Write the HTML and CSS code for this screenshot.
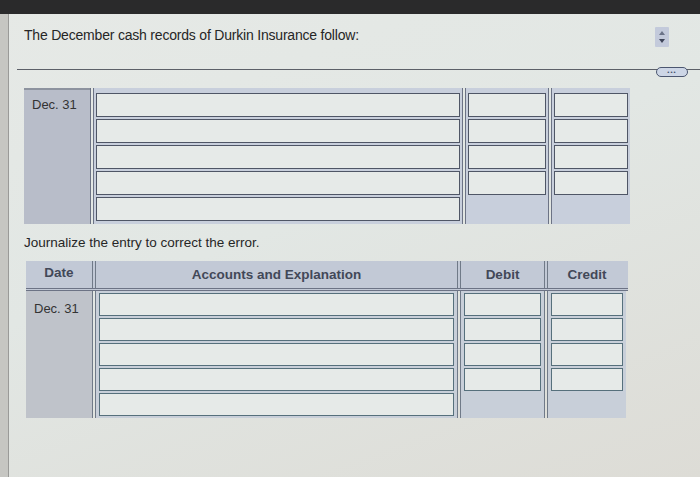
FILE: index.html
```html
<!DOCTYPE html>
<html>
<head>
<meta charset="utf-8">
<link rel="stylesheet" href="styles.css">
</head>
<body>
<div class="topbar"></div>
<div class="frame">
  <div class="edge"></div>
  <div class="content">
    <div class="titlerow">
      <div class="title">The December cash records of Durkin Insurance follow:</div>
      <div class="scroller">
        <svg width="12" height="18" viewBox="0 0 12 18"><path d="M6 3 L9 7 L3 7 Z" fill="#6b7388"/><path d="M3 11 L9 11 L6 15 Z" fill="#3d4458"/></svg>
      </div>
    </div>
    <div class="ruleRow">
      <div class="rule"></div>
      <div class="pill">&bull;&bull;&bull;</div>
    </div>

    <div class="t1">
      <div class="col date"><span class="datetxt">Dec. 31</span></div>
      <div class="sep"></div>
      <div class="col acct">
        <div class="inp"></div><div class="inp"></div><div class="inp"></div><div class="inp"></div><div class="inp"></div>
      </div>
      <div class="sep"></div>
      <div class="col num">
        <div class="inp"></div><div class="inp"></div><div class="inp"></div><div class="inp"></div>
      </div>
      <div class="sep"></div>
      <div class="col num cr">
        <div class="inp"></div><div class="inp"></div><div class="inp"></div><div class="inp"></div>
      </div>
    </div>

    <div class="prompt">Journalize the entry to correct the error.</div>

    <div class="t2">
      <div class="hdr">
        <div class="h hdate">Date</div>
        <div class="sep"></div>
        <div class="h hacct">Accounts and Explanation</div>
        <div class="sep"></div>
        <div class="h hdeb">Debit</div>
        <div class="sep"></div>
        <div class="h hcred">Credit</div>
      </div>
      <div class="body">
        <div class="col date2"><span class="datetxt">Dec. 31</span></div>
        <div class="sep"></div>
        <div class="col acct2">
          <div class="inp"></div><div class="inp"></div><div class="inp"></div><div class="inp"></div><div class="inp"></div>
        </div>
        <div class="sep"></div>
        <div class="col num2">
          <div class="inp"></div><div class="inp"></div><div class="inp"></div><div class="inp"></div>
        </div>
        <div class="sep"></div>
        <div class="col num2 cr2">
          <div class="inp"></div><div class="inp"></div><div class="inp"></div><div class="inp"></div>
        </div>
      </div>
    </div>
  </div>
</div>
</body>
</html>
```
FILE: styles.css
```css
html, body { margin: 0; padding: 0; }
body {
  width: 700px;
  height: 477px;
  overflow: hidden;
  background: linear-gradient(160deg, #e6e9e6 0%, #e2e7e4 45%, #dddcd6 100%);
  font-family: "Liberation Sans", Arial, sans-serif;
  color: #262626;
}
.topbar { height: 14px; background: #2a2a2b; }
.frame { display: flex; height: 463px; }
.edge { width: 8px; background: #c6c6c2; border-right: 1px solid #9a9a98; flex: none; }
.content { flex: 1; padding-left: 15px; }
.titlerow { display: flex; align-items: flex-start; height: 34px; padding-top: 13px; }
.title { font-size: 14px; flex: 1; letter-spacing: -0.2px; line-height: 16px; }
.scroller {
  width: 14px; height: 20px; background: #c3cadb; margin-right: 31px; margin-top: 0px;
  display: flex; align-items: center; justify-content: center; border-radius: 1px;
}
.ruleRow { display: flex; align-items: center; margin-left: -7px; height: 12px; margin-top: 2px; }
.rule { flex: 1; height: 1px; background: #5c6068; }
.pill {
  width: 30px; height: 8px; border: 1px solid #4b5670; border-radius: 5px; background: #cdd6e6;
  font-size: 6px; line-height: 8px; text-align: center; color: #44506a; letter-spacing: 1px;
}
.ruleRow .pill { margin-left: -44px; margin-right: 12px; margin-top: 6px; }

.t1 { display: flex; margin-top: 13px; height: 136px; width: 607px; }
.col { display: flex; flex-direction: column; gap: 2px; padding: 5px 2px 2px 2px; box-sizing: border-box; }
.sep { width: 2px; border-left: 1px solid #6c7385; border-right: 1px solid #6c7385; flex: none; }
.date { width: 66px; background: #b8bdc9; border-top: 2px solid #8d939f; padding: 7px 0 0 0; }
.date2 { width: 66px; background: #bfc3ca; padding: 10px 0 0 0; }
.datetxt { font-size: 13px; color: #333; padding-left: 8px; }
.acct { width: 368px; background: #c8cfdc; }
.num { width: 82px; background: #c8cfdc; padding-left: 2px; padding-right: 2px; }
.cr { width: 78px; }
.inp { height: 22px; border: 1px solid #4f5666; background: #e6eae8; flex: none; }

.prompt { font-size: 13.5px; margin-top: 12px; height: 25px; line-height: 14px; color: #262626; }

.t2 { width: 602px; margin-left: 2px; }
.hdr { display: flex; height: 27px; background: #c2c9d6; border-bottom: 3px double #6c7385; }
.h { font-size: 13.5px; font-weight: bold; color: #424858; display: flex; align-items: center; justify-content: center; }
.hdate { width: 66px; padding-bottom: 5px; }
.hacct { width: 361px; }
.hdeb { width: 83px; }
.hcred { width: 78px; }
.body { display: flex; height: 127px; }
.acct2 { width: 361px; background: #c8cfd9; padding: 2px 3px 2px 3px; }
.num2 { width: 83px; background: #c8cfd9; padding: 2px 3px 2px 3px; }
.cr2 { width: 78px; }
.body .inp { height: 21px; border-color: #56707c; }
.t2 .sep { border-color: #707a88; }
```
